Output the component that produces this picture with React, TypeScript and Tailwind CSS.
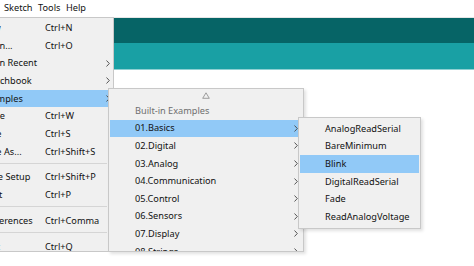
import React from "react";

const Chevron = () => (
  <svg width="4" height="7" viewBox="0 0 4 7" className="shrink-0">
    <path d="M0.5 0.5 L3.3 3.5 L0.5 6.5" fill="none" stroke="#444" strokeWidth="0.9" />
  </svg>
);

type FileItem = { label?: string; shortcut?: string; sub?: boolean; active?: boolean; sep?: boolean };

const fileItems: FileItem[] = [
  { label: "New", shortcut: "Ctrl+N" },
  { label: "Open...", shortcut: "Ctrl+O" },
  { label: "Open Recent", sub: true },
  { label: "Sketchbook", sub: true },
  { label: "Examples", sub: true, active: true },
  { label: "Close", shortcut: "Ctrl+W" },
  { label: "Save", shortcut: "Ctrl+S" },
  { label: "Save As...", shortcut: "Ctrl+Shift+S" },
  { sep: true },
  { label: "Page Setup", shortcut: "Ctrl+Shift+P" },
  { label: "Print", shortcut: "Ctrl+P" },
  { sep: true },
  { label: "Preferences", shortcut: "Ctrl+Comma" },
  { sep: true },
  { label: "Quit", shortcut: "Ctrl+Q" },
];

const examples = [
  "01.Basics",
  "02.Digital",
  "03.Analog",
  "04.Communication",
  "05.Control",
  "06.Sensors",
  "07.Display",
  "08.Strings",
];

const basics = ["AnalogReadSerial", "BareMinimum", "Blink", "DigitalReadSerial", "Fade", "ReadAnalogVoltage"];

export default function App() {
  return (
    <div
      className="relative w-[474px] h-[266px] overflow-hidden bg-white text-[9.2px] text-[#111]"
      style={{ fontFamily: '"Noto Sans", "Open Sans", sans-serif' }}
    >
      {/* menu bar */}
      <div className="h-[18px] flex items-center gap-[5.5px] pl-[4px] pb-[1px] border-b border-[#e6e6e6]">
        <span>Sketch</span>
        <span>Tools</span>
        <span>Help</span>
      </div>
      {/* teal toolbars */}
      <div className="h-[25px] bg-[#066466]" />
      <div className="h-[27px] bg-[#19a0a4] border-b border-[#8fd0d2]" />

      {/* File menu */}
      <div className="absolute left-[-40px] top-[17px] w-[154px] h-[235px] bg-[#f0f0f0] border border-[#c8c8c8] pt-[1px] overflow-hidden">
        {fileItems.map((it, i) =>
          it.sep ? (
            <div key={i} className="h-[8px] pt-[2px] pl-[30px] pr-[6px]">
              <div className="h-px bg-[#d5d5d5]" />
            </div>
          ) : (
            <div
              key={i}
              className={`h-[17.7px] mx-[2px] flex items-center pl-[18.5px] pr-[1px] ${it.active ? "bg-[#91c9f7]" : ""}`}
            >
              <span className="w-[63.5px] shrink-0 whitespace-nowrap">{it.label}</span>
              <span className="flex-1 whitespace-nowrap">{it.shortcut}</span>
              {it.sub && <Chevron />}
            </div>
          )
        )}
      </div>

      {/* Examples submenu */}
      <div className="absolute left-[108px] top-[88px] w-[196px] h-[164px] bg-[#f0f0f0] border border-[#c8c8c8] overflow-hidden shadow-[2px_2px_3px_rgba(0,0,0,0.12)]">
        <div className="h-[13px] flex items-center justify-center">
          <svg width="8" height="7" viewBox="0 0 8 7">
            <path d="M4 0.8 L7.3 6.3 L0.7 6.3 Z" fill="none" stroke="#888" strokeWidth="0.8" />
          </svg>
        </div>
        <div className="h-[17.6px] flex items-center pl-[26px] text-[#6e6e6e]">Built-in Examples</div>
        {examples.map((e, i) => (
          <div
            key={e}
            className={`h-[17.6px] mx-[1px] flex items-center pl-[25px] pr-[4px] ${i === 0 ? "bg-[#91c9f7]" : ""}`}
          >
            <span className="flex-1 whitespace-nowrap">{e}</span>
            <Chevron />
          </div>
        ))}
      </div>

      {/* Basics submenu */}
      <div className="absolute left-[298px] top-[117px] w-[123px] h-[112px] bg-[#f0f0f0] border border-[#c8c8c8] py-[2px] shadow-[2px_2px_3px_rgba(0,0,0,0.12)]">
        {basics.map((b) => (
          <div
            key={b}
            className={`h-[17.6px] mx-[1px] flex items-center pl-[25px] whitespace-nowrap ${b === "Blink" ? "bg-[#91c9f7]" : ""}`}
          >
            {b}
          </div>
        ))}
      </div>
    </div>
  );
}
